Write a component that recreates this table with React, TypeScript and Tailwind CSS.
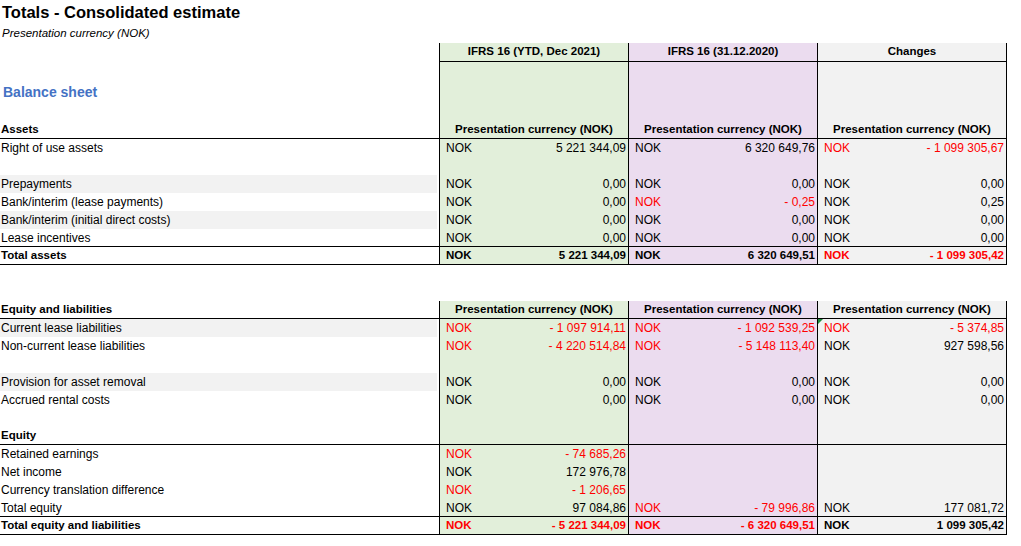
import React from "react";

type Cell = { v: string; red?: boolean } | null;
type Row = {
  label?: string;
  bold?: boolean;
  shade?: boolean;
  cells?: Cell[];
  line?: boolean;
  header?: boolean;
  tri?: boolean;
};

const BG = ["bg-[#e2efda]", "bg-[#ebdcef]", "bg-[#f2f2f2]"];
const FONT = { fontFamily: '"Liberation Sans", Arial, sans-serif' };

const z: Cell = { v: "0,00" };
const n = (v: string, red = false): Cell => ({ v, red });

const rows1: Row[] = [
  { label: "Right of use assets", cells: [n("5 221 344,09"), n("6 320 649,76"), n("- 1 099 305,67", true)] },
  { cells: [null, null, null] },
  { label: "Prepayments", shade: true, cells: [z, z, z] },
  { label: "Bank/interim (lease payments)", cells: [z, n("- 0,25", true), n("0,25")] },
  { label: "Bank/interim (initial direct costs)", shade: true, cells: [z, z, z] },
  { label: "Lease incentives", line: true, cells: [z, z, z] },
  { label: "Total assets", bold: true, line: true, cells: [n("5 221 344,09"), n("6 320 649,51"), n("- 1 099 305,42", true)] },
];

const rows2: Row[] = [
  { label: "Equity and liabilities", bold: true, line: true, header: true },
  { label: "Current lease liabilities", shade: true, tri: true, cells: [n("- 1 097 914,11", true), n("- 1 092 539,25", true), n("- 5 374,85", true)] },
  { label: "Non-current lease liabilities", cells: [n("- 4 220 514,84", true), n("- 5 148 113,40", true), n("927 598,56")] },
  { cells: [null, null, null] },
  { label: "Provision for asset removal", shade: true, cells: [z, z, z] },
  { label: "Accrued rental costs", cells: [z, z, z] },
  { cells: [null, null, null] },
  { label: "Equity", bold: true, line: true, cells: [null, null, null] },
  { label: "Retained earnings", cells: [n("- 74 685,26", true), null, null] },
  { label: "Net income", cells: [n("172 976,78"), null, null] },
  { label: "Currency translation difference", cells: [n("- 1 206,65", true), null, null] },
  { label: "Total equity", line: true, cells: [n("97 084,86"), n("- 79 996,86", true), n("177 081,72")] },
  { label: "Total equity and liabilities", bold: true, line: true, cells: [n("- 5 221 344,09", true), n("- 6 320 649,51", true), n("1 099 305,42")] },
];

function DataCol({ i, children, extra = "" }: { i: number; children?: React.ReactNode; extra?: string }) {
  return (
    <div
      className={`relative flex h-full shrink-0 items-center border-l border-black ${BG[i]} ${
        i === 2 ? "w-[190px] border-r" : "w-[189px]"
      } ${extra}`}
    >
      {children}
    </div>
  );
}

function RowView({ r }: { r: Row }) {
  const b = r.bold ? "font-bold text-[11.5px]" : "text-[12px]";
  return (
    <div className={`flex w-[1007px] ${r.line ? "h-[18px] border-b border-black" : "h-[18px]"}`}>
      <div
        className={`flex h-full w-[437px] shrink-0 items-center pl-[1px] text-black ${b} ${
          r.shade ? "bg-[#f2f2f2]" : ""
        }`}
      >
        {r.label}
      </div>
      <div className="w-[2px] shrink-0" />
      {[0, 1, 2].map((i) => {
        if (r.header) {
          return (
            <DataCol key={i} i={i} extra="justify-center">
              <span className="text-[11.5px] font-bold text-black">Presentation currency (NOK)</span>
            </DataCol>
          );
        }
        const c = r.cells ? r.cells[i] : null;
        return (
          <DataCol key={i} i={i} extra="justify-between pl-[6px] pr-[2px]">
            {r.tri && i === 2 && (
              <div className="absolute left-0 top-0 h-0 w-0 border-r-[5px] border-t-[5px] border-r-transparent border-t-[#1f8a3c]" />
            )}
            {c && (
              <>
                <span className={`${b} ${c.red ? "text-[#ff0000]" : "text-black"}`}>NOK</span>
                <span className={`${b} whitespace-pre ${c.red ? "text-[#ff0000]" : "text-black"}`}>{c.v}</span>
              </>
            )}
          </DataCol>
        );
      })}
    </div>
  );
}

export default function App() {
  return (
    <div className="h-[546px] w-[1021px] overflow-hidden bg-white text-black" style={FONT}>
      <div className="flex h-[25px] items-center pl-[2px] text-[16.5px] font-bold">Totals - Consolidated estimate</div>
      <div className="flex h-[18px] items-center pl-[2px] text-[11.5px] italic">Presentation currency (NOK)</div>

      {/* Column headings */}
      <div className="flex h-[19px] w-[1007px]">
        <div className="w-[439px] shrink-0" />
        {["IFRS 16 (YTD, Dec 2021)", "IFRS 16 (31.12.2020)", "Changes"].map((t, i) => (
          <DataCol key={t} i={i} extra="justify-center border-b">
            <span className="text-[11.5px] font-bold">{t}</span>
          </DataCol>
        ))}
      </div>

      {/* Tall row with section title */}
      <div className="flex h-[59px] w-[1007px]">
        <div className="flex w-[439px] shrink-0 items-center pl-[3px] pt-[2px] text-[14px] font-bold text-[#4472c4]">
          Balance sheet
        </div>
        {[0, 1, 2].map((i) => (
          <DataCol key={i} i={i} />
        ))}
      </div>

      <div className="flex h-[18px] w-[1007px] border-b border-black">
        <div className="flex w-[439px] shrink-0 items-center pl-[1px] text-[11.5px] font-bold">Assets</div>
        {[0, 1, 2].map((i) => (
          <DataCol key={i} i={i} extra="justify-center">
            <span className="text-[11.5px] font-bold">Presentation currency (NOK)</span>
          </DataCol>
        ))}
      </div>

      {rows1.map((r, k) => (
        <RowView key={k} r={r} />
      ))}

      <div className="h-[36px]" />

      {rows2.map((r, k) => (
        <RowView key={k} r={r} />
      ))}
    </div>
  );
}
